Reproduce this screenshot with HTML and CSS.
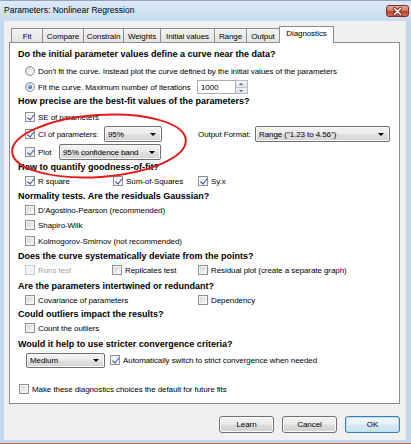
FILE: index.html
```html
<!DOCTYPE html>
<html>
<head>
<meta charset="utf-8">
<title>Parameters: Nonlinear Regression</title>
<link rel="stylesheet" href="styles.css">
</head>
<body>
<div class="win">
  <div class="titlebar">
    <span class="title">Parameters: Nonlinear Regression</span>
    <div class="close">
      <svg width="13" height="9" viewBox="0 0 13 9"><path d="M3.5 1.5 L9.5 7.5 M9.5 1.5 L3.5 7.5" stroke="#6b2218" stroke-width="3.2" stroke-linecap="round"/><path d="M3.5 1.5 L9.5 7.5 M9.5 1.5 L3.5 7.5" stroke="#ffffff" stroke-width="1.7" stroke-linecap="round"/></svg>
    </div>
  </div>
  <div class="frame">
    <div class="dlg">
      <div class="tabs">
        <div class="tab w-fit">Fit</div>
        <div class="tab w-compare">Compare</div>
        <div class="tab w-constrain">Constrain</div>
        <div class="tab w-weights">Weights</div>
        <div class="tab w-initial">Initial values</div>
        <div class="tab w-range">Range</div>
        <div class="tab w-output">Output</div>
        <div class="tab sel w-diag">Diagnostics</div>
      </div>
      <div class="panel">
        <div class="h">Do the initial parameter values define a curve near the data?</div>
        <div class="r mt3"><span class="rd"></span>Don't fit the curve. Instead plot the curve defined by the initial values of the parameters</div>
        <div class="r mt2"><span class="rd on"></span><span class="itlabel">Fit the curve. Maximum number of iterations</span><span class="num">1000</span><span class="spin"><i class="sp up"></i><i class="sp dn"></i></span></div>
        <div class="h">How precise are the best-fit values of the parameters?</div>
        <div class="r mt2"><span class="cb on"></span>SE of parameters</div>
        <div class="r mt3"><span class="cb on"></span><span class="cilabel">CI of parameters:</span><span class="dd dd-ci">95%</span><span class="oflabel">Output Format:</span><span class="dd dd-of">Range ("1.23 to 4.56")</span></div>
        <div class="r mt4"><span class="cb on"></span><span class="plabel">Plot</span><span class="dd dd-plot">95% confidence band</span></div>
        <div class="h mt1">How to quantify goodness-of-fit?</div>
        <div class="r g3"><span class="c"><span class="cb on"></span>R square</span><span class="c c2"><span class="cb on"></span>Sum-of-Squares</span><span class="c"><span class="cb on"></span>Sy.x</span></div>
        <div class="h mt1">Normality tests. Are the residuals Gaussian?</div>
        <div class="r"><span class="cb"></span>D'Agostino-Pearson (recommended)</div>
        <div class="r mt1"><span class="cb"></span>Shapiro-Wilk</div>
        <div class="r mt2"><span class="cb"></span>Kolmogorov-Smirnov (not recommended)</div>
        <div class="h mt1">Does the curve systematically deviate from the points?</div>
        <div class="r g3"><span class="c off"><span class="cb"></span>Runs test</span><span class="c"><span class="cb"></span>Replicates test</span><span class="c"><span class="cb"></span>Residual plot (create a separate graph)</span></div>
        <div class="h mt2">Are the parameters intertwined or redundant?</div>
        <div class="r g3"><span class="c span2"><span class="cb"></span>Covariance of parameters</span><span class="c"><span class="cb"></span>Dependency</span></div>
        <div class="h">Could outliers impact the results?</div>
        <div class="r"><span class="cb"></span>Count the outliers</div>
        <div class="h mt2">Would it help to use stricter convergence criteria?</div>
        <div class="r mt2"><span class="dd dd-med">Medium</span><span class="cb on"></span>Automatically switch to strict convergence when needed</div>
        <div class="r rdef"><span class="cb"></span>Make these diagnostics choices the default for future fits</div>
      </div>
      <div class="buttons">
        <div class="btn">Learn</div>
        <div class="btn">Cancel</div>
        <div class="btn ok">OK</div>
      </div>
    </div>
  </div>
  <svg class="mark" width="411" height="444" viewBox="0 0 411 444"><ellipse cx="99" cy="146" rx="87" ry="31" transform="rotate(-4 99 146)" fill="none" stroke="#e31b1b" stroke-width="2"/></svg>
</div>
</body>
</html>
```
FILE: styles.css
```css
* { box-sizing: border-box; margin: 0; padding: 0; }
body {
  margin: 0;
  width: 411px;
  height: 444px;
  overflow: hidden;
  font-family: "Liberation Sans", Arial, sans-serif;
  font-size: 8px;
  letter-spacing: -0.08px;
  color: #000;
  background: #c6d9ee;
}
.win {
  position: relative;
  width: 411px;
  height: 444px;
  display: flex;
  flex-direction: column;
  background: #c3d7ed;
  border-bottom: 1px solid #d2605c;
}
.titlebar {
  height: 21px;
  flex: none;
  display: flex;
  align-items: center;
  justify-content: space-between;
  padding: 0 2px 2px 4px;
  background: linear-gradient(#dce9f6, #c9dcf0);
  border-top: 1px solid #8fa6c0;
}
.title {
  font-size: 8.5px;
  letter-spacing: 0;
  color: #000;
}
.close {
  width: 23px;
  height: 12px;
  margin-top: 2px;
  border: 1px solid #7a3328;
  border-radius: 3px;
  background: linear-gradient(#e9aa9c 0%, #d67a66 45%, #c2452f 55%, #cf6a50 100%);
  display: flex;
  align-items: center;
  justify-content: center;
}
.frame {
  flex: 1;
  display: flex;
  padding: 0 5px 3px 4px;
}
.dlg {
  flex: 1;
  background: #f0f0f0;
  padding: 5px 6px 0 5px;
  display: flex;
  flex-direction: column;
}
.tabs {
  height: 16px;
  display: flex;
  align-items: flex-end;
  margin-left: 2px;
}
.tab {
  height: 14px;
  border: 1px solid #898c95;
  border-bottom: none;
  margin-right: -1px;
  background: linear-gradient(#f3f3f3, #e3e3e3);
  display: flex;
  align-items: center;
  justify-content: center;
  padding-top: 1px;
}
.tab.sel {
  height: 17px;
  margin-bottom: -1px;
  background: #fff;
  position: relative;
  z-index: 1;
  padding-top: 0;
  padding-bottom: 3px;
}
.w-fit { width: 32px; }
.w-compare { width: 42px; }
.w-constrain { width: 41px; }
.w-weights { width: 38px; }
.w-initial { width: 55px; }
.w-range { width: 33px; }
.w-output { width: 34px; }
.w-diag { width: 55px; }
.panel {
  width: 391px;
  height: 362px;
  background: #fff;
  border: 1px solid #898c95;
  padding: 4px 0 0 8px;
  flex: none;
}
.h {
  height: 14px;
  display: flex;
  align-items: center;
  font-family: "Liberation Sans", Arial, sans-serif;
  font-weight: bold;
  font-size: 9px;
  letter-spacing: 0;
  white-space: nowrap;
}
.r {
  height: 14px;
  display: flex;
  align-items: center;
  margin-left: 7px;
  white-space: nowrap;
}
.mt1 { margin-top: 1px; }
.mt2 { margin-top: 2px; }
.mt3 { margin-top: 3px; }
.mt4 { margin-top: 4px; }
.g3 {
  display: grid;
  grid-template-columns: 87px 86px auto;
  align-items: center;
}
.c { display: flex; align-items: center; }
.c2 { margin-left: 1px; }
.span2 { grid-column: 1 / 3; }
.off { color: #a3a3a3; }
.off .cb {
  border-color: #c9c9c9;
  background: #f4f4f4;
}
.rdef {
  margin-left: 1px;
  margin-top: 15px;
}

/* checkbox */
.cb {
  width: 10px;
  height: 10px;
  flex: none;
  margin-right: 3px;
  border: 1px solid #8e8f8f;
  background: linear-gradient(135deg, #d2d2d2 0%, #e6e6e6 50%, #fafafa 100%);
  box-shadow: inset 0 0 0 1px #f6f6f6;
  position: relative;
}
.cb.on {
  background: linear-gradient(135deg, #e4e8ef 0%, #f4f6f9 60%, #ffffff 100%);
}
.cb.on::after {
  content: "";
  position: absolute;
  left: 2.5px;
  top: 0px;
  width: 2.5px;
  height: 5.5px;
  border: solid #2d4e9e;
  border-width: 0 1.6px 1.6px 0;
  transform: rotate(38deg);
}

/* radio */
.rd {
  width: 10px;
  height: 10px;
  flex: none;
  margin-right: 3px;
  border-radius: 50%;
  border: 1px solid #8e8f8f;
  background: radial-gradient(circle at 65% 65%, #fbfbfb 0%, #e2e2e2 55%, #cfcfcf 100%);
  position: relative;
}
.rd.on::after {
  content: "";
  position: absolute;
  left: 2px;
  top: 2px;
  width: 4px;
  height: 4px;
  border-radius: 50%;
  background: radial-gradient(circle at 40% 35%, #8cc4f4 0%, #2f6fc0 60%, #1c4f98 100%);
}

/* iterations field */
.itlabel { width: 159px; }
.num {
  width: 39px;
  height: 14px;
  border: 1px solid #a9b0ba;
  background: #fff;
  padding-left: 3px;
  display: flex;
  align-items: center;
}
.spin {
  width: 12px;
  height: 14px;
  display: flex;
  flex-direction: column;
  border: 1px solid #b6bcc6;
  border-left: none;
}
.sp {
  flex: 1;
  background: linear-gradient(#f2f4f7, #dde3ea);
  position: relative;
}
.sp.up { border-bottom: 1px solid #c3c9d1; }
.sp::after {
  content: "";
  position: absolute;
  left: 3px;
  top: 2px;
  border-left: 2.5px solid transparent;
  border-right: 2.5px solid transparent;
}
.sp.up::after { border-bottom: 2.5px solid #4d6185; }
.sp.dn::after { border-top: 2.5px solid #4d6185; top: 2px; }

/* dropdowns */
.dd {
  height: 16px;
  border: 1px solid #707070;
  border-radius: 2px;
  background: linear-gradient(#f3f3f3 0%, #ebebeb 48%, #dfdfdf 52%, #d4d4d4 100%);
  box-shadow: inset 0 0 0 1px #f8f8f8;
  display: flex;
  align-items: center;
  padding-left: 3px;
  position: relative;
  flex: none;
}
.dd::after {
  content: "";
  position: absolute;
  right: 5px;
  top: 6px;
  border-left: 3px solid transparent;
  border-right: 3px solid transparent;
  border-top: 3.5px solid #000;
}
.cilabel { width: 66px; }
.dd-ci { width: 58px; }
.oflabel { margin-left: 36px; width: 57px; }
.dd-of { width: 135px; }
.plabel { width: 21px; }
.dd-plot { width: 102px; }
.dd-med { width: 79px; height: 15px; margin-left: 1px; margin-right: 5px; }
.dd-med::after { top: 5px; }

/* buttons */
.buttons {
  display: flex;
  justify-content: flex-end;
  gap: 8px;
  margin-top: 12px;
}
.btn {
  width: 55px;
  height: 17px;
  border: 1px solid #707070;
  border-radius: 3px;
  background: linear-gradient(#f2f2f2 0%, #ebebeb 48%, #dddddd 52%, #cfcfcf 100%);
  box-shadow: inset 0 0 0 1px #fbfbfb;
  display: flex;
  align-items: center;
  justify-content: center;
}
.btn.ok {
  border-color: #3c7fb1;
  background: linear-gradient(#f1f8fc 0%, #e6f1f8 48%, #d6e8f4 52%, #cde3f1 100%);
  box-shadow: inset 0 0 0 1px #b4e2fa;
}

.mark {
  position: absolute;
  left: 0;
  top: 0;
  pointer-events: none;
}
```
